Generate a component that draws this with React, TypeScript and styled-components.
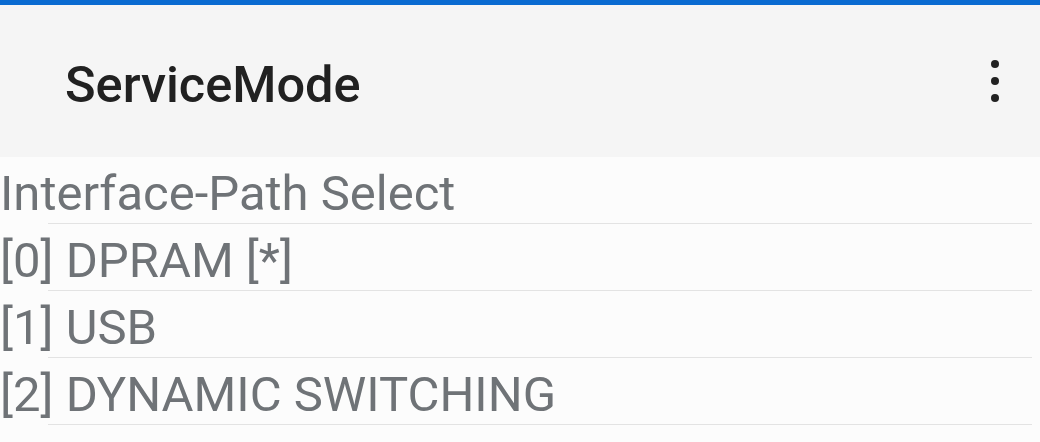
import React from "react";
import styled, { createGlobalStyle } from "styled-components";

const GlobalStyle = createGlobalStyle`
  html, body {
    margin: 0;
    padding: 0;
    background: #fcfcfc;
    font-family: Roboto, "Noto Sans", sans-serif;
  }
`;

const Screen = styled.div`
  width: 1040px;
  height: 442px;
  overflow: hidden;
  display: flex;
  flex-direction: column;
  background: #fcfcfc;
`;

const StatusStrip = styled.div`
  height: 5px;
  background: #0a6bd1;
`;

const Toolbar = styled.div`
  height: 152px;
  background: #f5f5f5;
  display: flex;
  align-items: center;
  justify-content: space-between;
  padding: 0 41px 0 65px;
`;

const Title = styled.h1`
  margin: 6px 0 0;
  font-size: 50.5px;
  font-weight: 500;
  color: #212121;
`;

const MenuButton = styled.div`
  display: flex;
  flex-direction: column;
  gap: 9px;
`;

const Dot = styled.span`
  width: 8px;
  height: 8px;
  border-radius: 50%;
  background: #222;
`;

const List = styled.ul`
  list-style: none;
  margin: 0;
  padding: 0;
`;

const Row = styled.li`
  height: 67px;
  box-sizing: border-box;
  padding-top: 6px;
  position: relative;
  display: flex;
  align-items: center;
  font-size: 49px;
  color: #6f7377;
  &::after {
    content: "";
    position: absolute;
    left: 48px;
    right: 8px;
    bottom: 0;
    height: 1px;
    background: #e3e3e3;
  }
`;

const items = [
  "Interface-Path Select",
  "[0] DPRAM [*]",
  "[1] USB",
  "[2] DYNAMIC SWITCHING",
];

export default function App() {
  return (
    <Screen>
      <GlobalStyle />
      <StatusStrip />
      <Toolbar>
        <Title>ServiceMode</Title>
        <MenuButton>
          <Dot />
          <Dot />
          <Dot />
        </MenuButton>
      </Toolbar>
      <List>
        {items.map((item) => (
          <Row key={item}>{item}</Row>
        ))}
      </List>
    </Screen>
  );
}
